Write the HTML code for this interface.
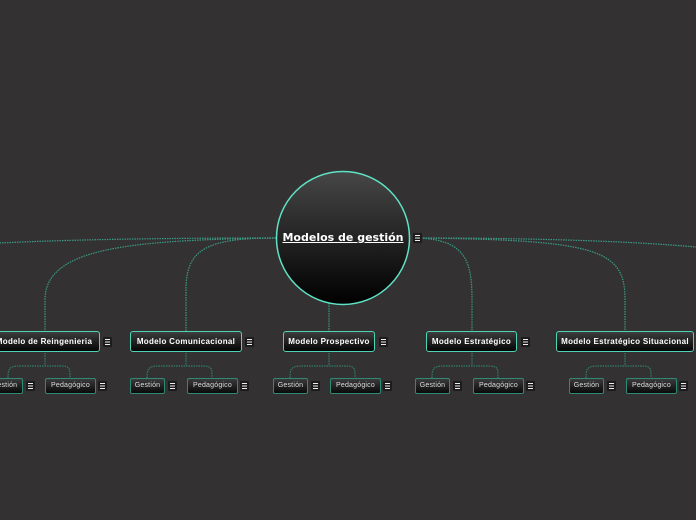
<!DOCTYPE html>
<html><head><meta charset="utf-8"><style>
body{margin:0;width:696px;height:520px;background:#333132;overflow:hidden;position:relative;font-family:"Liberation Sans",sans-serif}
.b{position:absolute;height:19px;border:1.5px solid #4fd3b6;border-radius:3px;background:linear-gradient(#3d3d3d,#050505);color:#fff;font-weight:bold;font-size:8px;letter-spacing:0.3px;line-height:19px;text-align:center;white-space:nowrap}
.s{position:absolute;height:14px;border:1px solid #2f8a74;border-radius:2px;background:linear-gradient(#3a3a3a,#0a0a0a);color:#ddd;font-size:7px;letter-spacing:0.2px;line-height:14px;text-align:center;white-space:nowrap}
.i{position:absolute;width:9px;height:10px;background:#1c1c1c;border-radius:1px}
.i::after{content:"";position:absolute;left:2px;top:2px;width:5px;height:6px;background:linear-gradient(#eee 0 1px,transparent 1px 2.5px,#eee 2.5px 3.5px,transparent 3.5px 5px,#eee 5px 6px)}
</style></head><body>
<svg width="696" height="520" style="position:absolute;left:0;top:0">
<g fill="none" stroke="#3c9a85" stroke-width="1.2" stroke-dasharray="1.5 1">
<path d="M276 238 C150 238 60 240 0 243"/>
<path d="M276 238 C120 240 45 250 45 300 L45 331"/>
<path d="M276 238 C205 238 186 250 186 290 L186 331"/>
<path d="M329 303 L329 331"/>
<path d="M418 238 C465 240 472 260 472 300 L472 331"/>
<path d="M418 238 C600 240 625 250 625 300 L625 331"/>
<path d="M418 238 C550 238 640 242 696 247"/>
<g stroke="#2f7f6d">
<path d="M45 353 L45 366 M8 378 C8 368 10 366 20 366 L60 366 C70 366 70 368 70 378"/>
<path d="M186 353 L186 366 M147 378 C147 368 149 366 159 366 L202 366 C212 366 212 368 212 378"/>
<path d="M329 353 L329 366 M290 378 C290 368 292 366 302 366 L345 366 C355 366 355 368 355 378"/>
<path d="M472 353 L472 366 M432 378 C432 368 434 366 444 366 L488 366 C498 366 498 368 498 378"/>
<path d="M625 353 L625 366 M586 378 C586 368 588 366 598 366 L641 366 C651 366 651 368 651 378"/>
</g></g>
<defs><linearGradient id="g" x1="0" y1="0" x2="0" y2="1"><stop offset="0" stop-color="#474747"/><stop offset="1" stop-color="#000"/></linearGradient></defs>
<circle cx="343" cy="238" r="66.5" fill="url(#g)" stroke="#5fe3c6" stroke-width="1.5"/>
</svg>
<div style="position:absolute;left:276px;top:229px;width:134px;text-align:center;color:#fff;font-family:'DejaVu Sans',sans-serif;font-weight:bold;font-size:11px;text-decoration:underline;line-height:18px">Modelos de gestión</div>
<div class="i" style="left:413px;top:233px"></div>

<div class="b" style="left:-12px;top:331px;width:110px">Modelo de Reingenieria</div><div class="i" style="left:103px;top:337px"></div>
<div class="b" style="left:130px;top:331px;width:110px">Modelo Comunicacional</div><div class="i" style="left:245px;top:337px"></div>
<div class="b" style="left:283px;top:331px;width:90px">Modelo Prospectivo</div><div class="i" style="left:379px;top:337px"></div>
<div class="b" style="left:426px;top:331px;width:89px">Modelo Estratégico</div><div class="i" style="left:521px;top:337px"></div>
<div class="b" style="left:556px;top:331px;width:136px">Modelo Estratégico Situacional</div><div class="i" style="left:698px;top:337px"></div>

<div class="s" style="left:-14px;top:378px;width:35px">Gestión</div><div class="i" style="left:26px;top:381px"></div>
<div class="s" style="left:45px;top:378px;width:49px">Pedagógico</div><div class="i" style="left:98px;top:381px"></div>
<div class="s" style="left:130px;top:378px;width:33px">Gestión</div><div class="i" style="left:168px;top:381px"></div>
<div class="s" style="left:187px;top:378px;width:49px">Pedagógico</div><div class="i" style="left:240px;top:381px"></div>
<div class="s" style="left:273px;top:378px;width:33px">Gestión</div><div class="i" style="left:311px;top:381px"></div>
<div class="s" style="left:330px;top:378px;width:49px">Pedagógico</div><div class="i" style="left:383px;top:381px"></div>
<div class="s" style="left:415px;top:378px;width:33px">Gestión</div><div class="i" style="left:453px;top:381px"></div>
<div class="s" style="left:473px;top:378px;width:49px">Pedagógico</div><div class="i" style="left:526px;top:381px"></div>
<div class="s" style="left:569px;top:378px;width:33px">Gestión</div><div class="i" style="left:607px;top:381px"></div>
<div class="s" style="left:626px;top:378px;width:49px">Pedagógico</div><div class="i" style="left:679px;top:381px"></div>
</body></html>
